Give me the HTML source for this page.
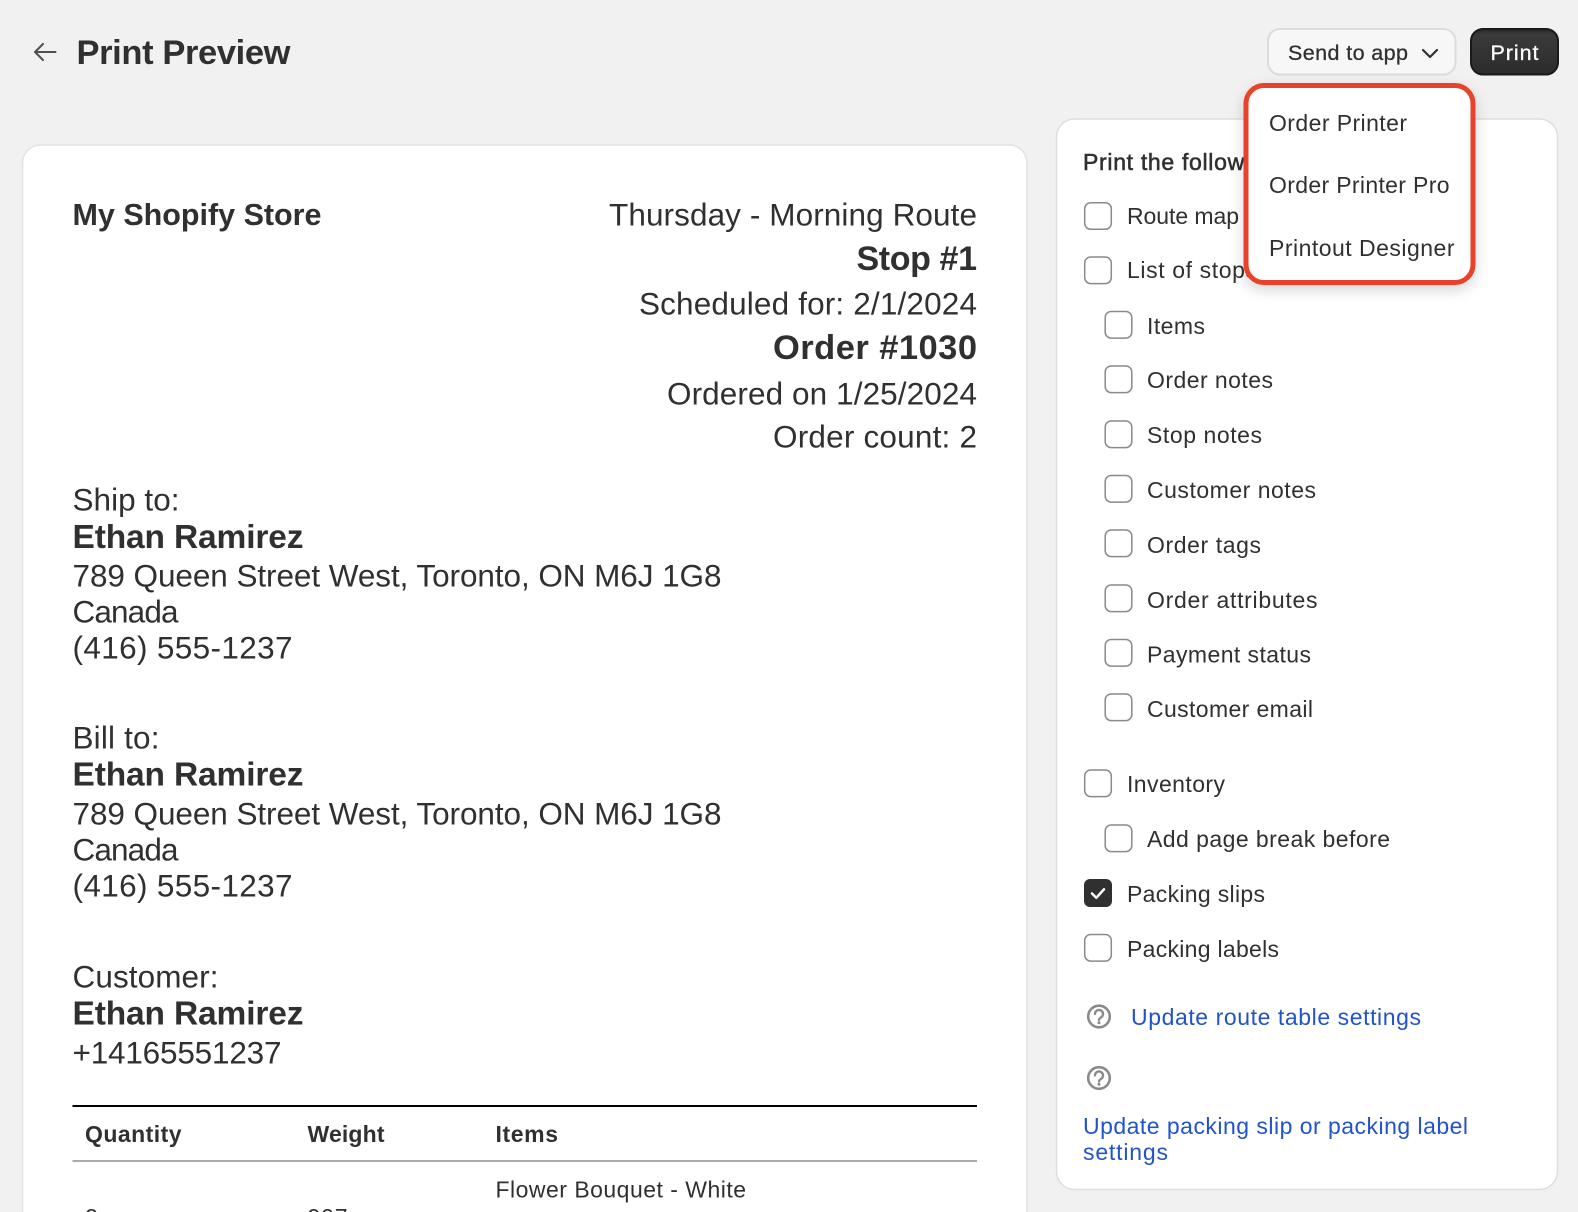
<!DOCTYPE html>
<html><head><meta charset="utf-8"><title>Print Preview</title>
<style>
html,body{margin:0;padding:0;background:#f1f1f1;width:1578px;height:1212px;overflow:hidden}
svg{display:block}
text{font-family:"Liberation Sans",sans-serif;fill:#303030}
.d{font-size:31.5px}
.db{font-size:31px;font-weight:bold}
.p{font-size:23px}
.h{font-size:23px;font-weight:bold}
.l{font-size:23px;fill:#2353c9}
</style></head><body>
<svg width="1578" height="1212" viewBox="0 0 1578 1212" xmlns="http://www.w3.org/2000/svg">
<defs>
<filter id="sh" x="-20%" y="-20%" width="140%" height="140%"><feDropShadow dx="0" dy="5" stdDeviation="7" flood-color="#000" flood-opacity=".16"/></filter>
<linearGradient id="pb" x1="0" y1="0" x2="0" y2="1"><stop offset="0" stop-color="#262626"/><stop offset=".12" stop-color="#3a3a3a"/><stop offset="1" stop-color="#2c2c2c"/></linearGradient>
</defs>
<rect width="1578" height="1212" fill="#f1f1f1"/>

<!-- header -->
<path d="M55.500 52H35M43 44L35 52l8 8" fill="none" stroke="#505050" stroke-width="2.100" stroke-linecap="round" stroke-linejoin="round"/>
<text x="76.500" y="64" font-size="34.500" font-weight="bold" textLength="214">Print Preview</text>

<rect x="1268" y="29" width="187.500" height="45.500" rx="12" fill="#f7f7f7" stroke="#dcdcdc" stroke-width="2"/>
<text x="1288" y="60" font-size="21.500" textLength="120" style="stroke:#303030;stroke-width:.3">Send to app</text>
<path d="M1423 50l7 7 7-7" fill="none" stroke="#303030" stroke-width="2.200" stroke-linecap="round" stroke-linejoin="round"/>
<rect x="1471" y="29" width="87" height="45.500" rx="12" fill="url(#pb)" stroke="#1a1a1a" stroke-width="2"/>
<text x="1490.500" y="60" font-size="21.500" textLength="48" style="fill:#fff;stroke:#fff;stroke-width:.3">Print</text>

<!-- left card -->
<rect x="22.500" y="145" width="1004.500" height="1120" rx="18" fill="#fff" stroke="#e2e2e2" stroke-width="1.500"/>
<text class="db" x="72.500" y="225" textLength="249" style="font-size:30.500px">My Shopify Store</text>
<text class="d" x="609" y="225.500" textLength="368">Thursday - Morning Route</text>
<text class="db" x="856.500" y="270" textLength="120.500" style="font-size:34px">Stop #1</text>
<text class="d" x="639" y="314.500" textLength="338">Scheduled for: 2/1/2024</text>
<text class="db" x="773" y="359" textLength="204" style="font-size:34.500px">Order #1030</text>
<text class="d" x="667" y="404.500" textLength="310">Ordered on 1/25/2024</text>
<text class="d" x="773" y="447.500" textLength="204">Order count: 2</text>

<text class="d" x="72.500" y="510.500" textLength="107">Ship to:</text>
<text class="db" x="72.500" y="548" textLength="231" style="font-size:33.500px">Ethan Ramirez</text>
<text class="d" x="72.500" y="586.500" textLength="649">789 Queen Street West, Toronto, ON M6J 1G8</text>
<text class="d" x="72.500" y="622.500" textLength="106">Canada</text>
<text class="d" x="72.500" y="658.500" textLength="220">(416) 555-1237</text>

<text class="d" x="72.500" y="748.500" textLength="87">Bill to:</text>
<text class="db" x="72.500" y="785.500" textLength="231" style="font-size:33.500px">Ethan Ramirez</text>
<text class="d" x="72.500" y="824.500" textLength="649">789 Queen Street West, Toronto, ON M6J 1G8</text>
<text class="d" x="72.500" y="860.500" textLength="106">Canada</text>
<text class="d" x="72.500" y="896.500" textLength="220">(416) 555-1237</text>

<text class="d" x="72.500" y="987.500" textLength="146">Customer:</text>
<text class="db" x="72.500" y="1024.500" textLength="231" style="font-size:33.500px">Ethan Ramirez</text>
<text class="d" x="72.500" y="1063.500" textLength="209">+14165551237</text>

<rect x="72.500" y="1105" width="904.500" height="2" fill="#000"/>
<rect x="72.500" y="1160" width="904.500" height="2" fill="#aaa"/>
<text class="h" x="85" y="1142" textLength="96.500">Quantity</text>
<text class="h" x="307.500" y="1142" textLength="77">Weight</text>
<text class="h" x="495.500" y="1142" textLength="62.500">Items</text>
<text class="p" x="495.500" y="1197.500" textLength="250.500">Flower Bouquet - White</text>
<text class="p" x="85" y="1225" textLength="14">2</text>
<text class="p" x="307.500" y="1225" textLength="40">907</text>

<!-- right card -->
<rect x="1056.500" y="119" width="501" height="1070.500" rx="18" fill="#fff" stroke="#dedede" stroke-width="1.500"/>
<text x="1083" y="170" font-size="23" textLength="194" style="stroke:#303030;stroke-width:.55">Print the following</text>

<g fill="#fff" stroke="#8a8a8a" stroke-width="1.500">
<rect x="1084.700" y="202.700" width="26.600" height="26.600" rx="6"/>
<rect x="1084.700" y="257" width="26.600" height="26.600" rx="6"/>
<rect x="1105.200" y="311.500" width="26.600" height="26.600" rx="6"/>
<rect x="1105.200" y="366" width="26.600" height="26.600" rx="6"/>
<rect x="1105.200" y="421" width="26.600" height="26.600" rx="6"/>
<rect x="1105.200" y="475.500" width="26.600" height="26.600" rx="6"/>
<rect x="1105.200" y="530" width="26.600" height="26.600" rx="6"/>
<rect x="1105.200" y="585" width="26.600" height="26.600" rx="6"/>
<rect x="1105.200" y="639.500" width="26.600" height="26.600" rx="6"/>
<rect x="1105.200" y="694" width="26.600" height="26.600" rx="6"/>
<rect x="1084.700" y="770" width="26.600" height="26.600" rx="6"/>
<rect x="1105.200" y="825" width="26.600" height="26.600" rx="6"/>
<rect x="1084.700" y="934.500" width="26.600" height="26.600" rx="6"/>
</g>
<rect x="1084" y="879" width="28" height="28" rx="6" fill="#303030"/>
<path d="M1092 893.500l4.300 4.300 7.700-8.500" fill="none" stroke="#fff" stroke-width="2.500" stroke-linecap="round" stroke-linejoin="round"/>

<text class="p" x="1127" y="224" textLength="112">Route map</text>
<text class="p" x="1127" y="278" textLength="130">List of stops</text>
<text class="p" x="1147" y="334" textLength="58">Items</text>
<text class="p" x="1147" y="388" textLength="126">Order notes</text>
<text class="p" x="1147" y="443" textLength="115">Stop notes</text>
<text class="p" x="1147" y="498" textLength="169">Customer notes</text>
<text class="p" x="1147" y="553" textLength="114">Order tags</text>
<text class="p" x="1147" y="608" textLength="170.500">Order attributes</text>
<text class="p" x="1147" y="662.500" textLength="164">Payment status</text>
<text class="p" x="1147" y="717" textLength="166">Customer email</text>
<text class="p" x="1127" y="792" textLength="98">Inventory</text>
<text class="p" x="1147" y="847" textLength="243">Add page break before</text>
<text class="p" x="1127" y="902" textLength="138">Packing slips</text>
<text class="p" x="1127" y="957" textLength="152">Packing labels</text>

<g fill="none" stroke="#8a8a8a">
<circle cx="1099" cy="1016.500" r="10.800" stroke-width="2.600"/>
<path d="M1095 1014a4 4 0 1 1 6.200 3.300c-1.400.9-2.200 1.500-2.200 2.700" stroke-width="2.300" stroke-linecap="round"/>
<circle cx="1099" cy="1078" r="10.800" stroke-width="2.600"/>
<path d="M1095 1075.500a4 4 0 1 1 6.200 3.300c-1.400.9-2.200 1.500-2.200 2.700" stroke-width="2.300" stroke-linecap="round"/>
</g>
<circle cx="1099" cy="1022.800" r="1.500" fill="#8a8a8a"/>
<circle cx="1099" cy="1084.300" r="1.500" fill="#8a8a8a"/>

<text class="l" x="1131" y="1025" textLength="290">Update route table settings</text>
<text class="l" x="1083" y="1134" textLength="385">Update packing slip or packing label</text>
<text class="l" x="1083" y="1160" textLength="85">settings</text>

<!-- dropdown -->
<rect x="1246" y="85.500" width="227" height="197" rx="18" fill="#fff" stroke="#e8432a" stroke-width="5" filter="url(#sh)"/>
<text class="p" x="1269" y="131" textLength="138">Order Printer</text>
<text class="p" x="1269" y="193" textLength="180.500">Order Printer Pro</text>
<text class="p" x="1269" y="256" textLength="185.500">Printout Designer</text>
</svg>
</body></html>
